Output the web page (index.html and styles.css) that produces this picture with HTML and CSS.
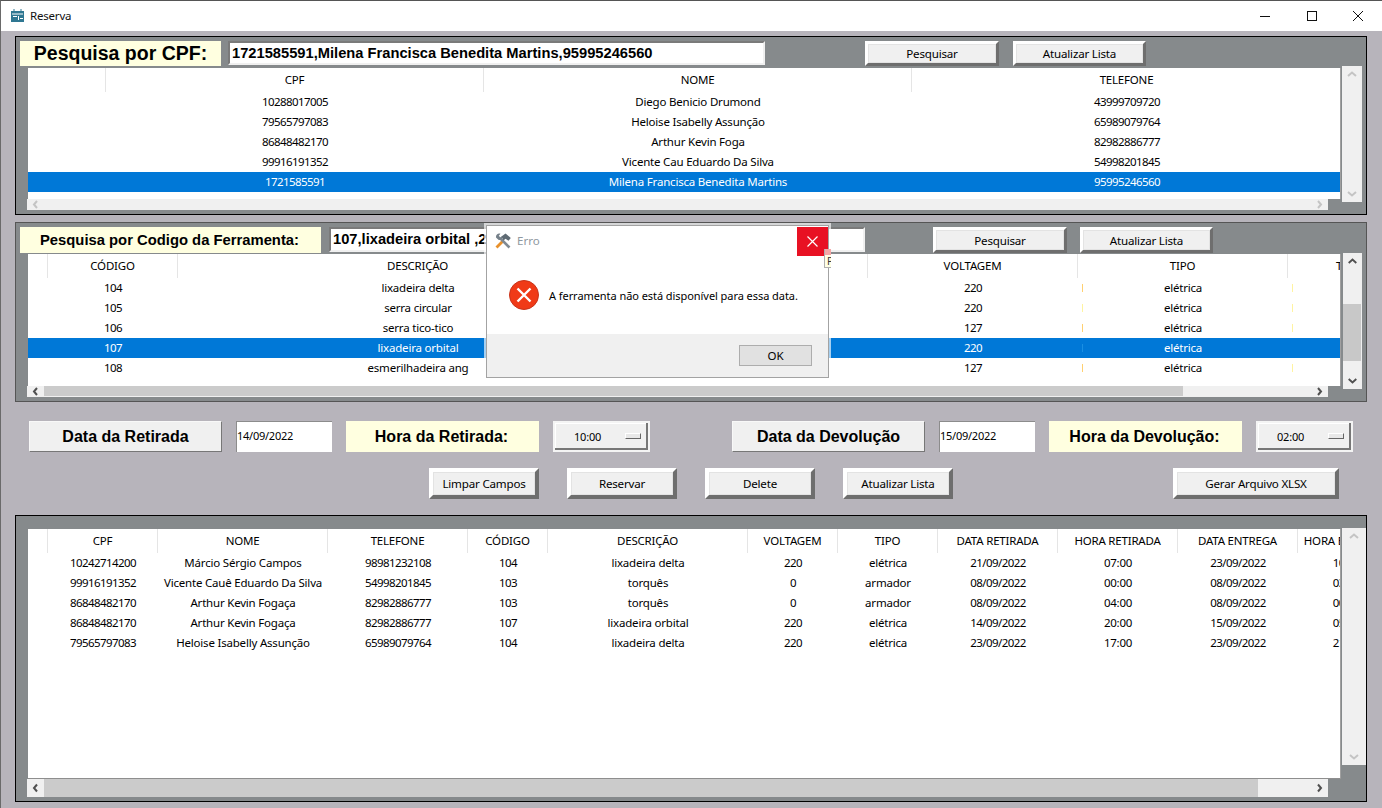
FILE: index.html
```html
<!DOCTYPE html>
<html lang="pt-BR">
<head>
<meta charset="utf-8">
<title>Reserva</title>
<link rel="stylesheet" href="styles.css">
</head>
<body>
<div class="window">
  <header class="titlebar">
    <svg class="app-icon" viewBox="0 0 13 13"><path fill="#2f7792" d="M0 2h2.500V0h1v2h6V0h1v2H13v11H0z"/><path fill="#fff" d="M1 4.500h11v1H1zM2 7h4v1H2zM7 7h1v4H7zM9 9h3v1H9z"/></svg>
    <span class="title-text">Reserva</span>
    <div class="win-controls">
      <svg class="win-btn" viewBox="0 0 46 30"><path d="M17 15.500h10" stroke="#111" fill="none"/></svg>
      <svg class="win-btn" viewBox="0 0 46 30"><rect x="18.500" y="10.500" width="9" height="9" stroke="#111" fill="none"/></svg>
      <svg class="win-btn" viewBox="0 0 46 30"><path d="M18 10l10 10M28 10L18 20" stroke="#111" fill="none"/></svg>
    </div>
  </header>

  <section class="panel panel-a">
    <div class="toolbar">
      <div class="label label-cpf">Pesquisa por CPF:</div>
      <div class="entry entry-cpf">1721585591,Milena Francisca Benedita Martins,95995246560</div>
      <button class="btn btn-search btn-first-a">Pesquisar</button>
      <button class="btn btn-search">Atualizar Lista</button>
    </div>
    <div class="panel-body">
      <div class="grid-col">
        <div class="table t1">
          <div class="row head"><span></span><span>CPF</span><span>NOME</span><span>TELEFONE</span></div>
          <div class="row"><span></span><span>10288017005</span><span>Diego Benicio Drumond</span><span>43999709720</span></div>
          <div class="row"><span></span><span>79565797083</span><span>Heloise Isabelly Assunção</span><span>65989079764</span></div>
          <div class="row"><span></span><span>86848482170</span><span>Arthur Kevin Foga</span><span>82982886777</span></div>
          <div class="row"><span></span><span>99916191352</span><span>Vicente Cau Eduardo Da Silva</span><span>54998201845</span></div>
          <div class="row sel"><span></span><span>1721585591</span><span>Milena Francisca Benedita Martins</span><span>95995246560</span></div>
        </div>
        <div class="hscroll hs-thin">
          <svg class="ar-h off" viewBox="0 0 17 11"><path d="M10 2L7 5.500 10 9"/></svg>
          <div class="h-track"></div>
          <svg class="ar-h off" viewBox="0 0 17 11"><path d="M7 2l3 3.500L7 9"/></svg>
        </div>
      </div>
      <div class="vscroll vs-a">
        <svg class="ar-v off" viewBox="0 0 20 17"><path d="M6 10l4-3.500 4 3.500"/></svg>
        <div class="v-track"></div>
        <svg class="ar-v off" viewBox="0 0 20 17"><path d="M6 7l4 3.500L14 7"/></svg>
      </div>
    </div>
  </section>

  <section class="panel panel-b">
    <div class="toolbar">
      <div class="label label-cod">Pesquisa por Codigo da Ferramenta:</div>
      <div class="entry entry-cod">107,lixadeira orbital ,220,elétrica</div>
      <button class="btn btn-search btn-first-b">Pesquisar</button>
      <button class="btn btn-search btn-second-b">Atualizar Lista</button>
    </div>
    <div class="panel-body">
      <div class="grid-col">
        <div class="table t2">
          <div class="row head"><span></span><span>CÓDIGO</span><span>DESCRIÇÃO</span><span></span><span>VOLTAGEM</span><span>TIPO</span><span class="clip-t">T</span></div>
          <div class="row"><span></span><span>104</span><span>lixadeira delta</span><span></span><span>220</span><span class="tick orange">elétrica</span><span class="tick"></span></div>
          <div class="row"><span></span><span>105</span><span>serra circular</span><span></span><span>220</span><span class="tick">elétrica</span><span class="tick"></span></div>
          <div class="row"><span></span><span>106</span><span>serra tico-tico</span><span></span><span>127</span><span class="tick orange">elétrica</span><span class="tick"></span></div>
          <div class="row sel"><span></span><span>107</span><span>lixadeira orbital</span><span></span><span>220</span><span class="tick blue">elétrica</span><span></span></div>
          <div class="row"><span></span><span>108</span><span>esmerilhadeira ang</span><span></span><span>127</span><span class="tick orange">elétrica</span><span class="tick"></span></div>
        </div>
        <div class="hscroll hs-thin">
          <svg class="ar-h" viewBox="0 0 17 11"><path d="M10 2L7 5.500 10 9"/></svg>
          <div class="h-track"><div class="h-thumb thumb-b"></div></div>
          <svg class="ar-h" viewBox="0 0 17 11"><path d="M7 2l3 3.500L7 9"/></svg>
        </div>
      </div>
      <div class="vscroll vs-b">
        <svg class="ar-v" viewBox="0 0 20 17"><path d="M6 10l4-3.500 4 3.500"/></svg>
        <div class="v-track"><div class="v-thumb"></div></div>
        <svg class="ar-v" viewBox="0 0 20 17"><path d="M6 7l4 3.500L14 7"/></svg>
      </div>
    </div>
  </section>

  <div class="controls">
    <button class="flat-btn">Data da Retirada</button>
    <div class="date">14/09/2022</div>
    <div class="label label-time">Hora da Retirada:</div>
    <div class="option"><span>10:00</span><i class="option-mark"></i></div>
    <button class="flat-btn group-gap">Data da Devolução</button>
    <div class="date">15/09/2022</div>
    <div class="label label-time">Hora da Devolução:</div>
    <div class="option"><span>02:00</span><i class="option-mark"></i></div>
  </div>

  <div class="actions">
    <button class="btn btn-action">Limpar Campos</button>
    <button class="btn btn-action">Reservar</button>
    <button class="btn btn-action">Delete</button>
    <button class="btn btn-action">Atualizar Lista</button>
    <button class="btn btn-xlsx">Gerar Arquivo XLSX</button>
  </div>

  <section class="panel panel-c">
    <div class="panel-body">
      <div class="grid-col">
        <div class="table t3">
          <div class="row head"><span></span><span>CPF</span><span>NOME</span><span>TELEFONE</span><span>CÓDIGO</span><span>DESCRIÇÃO</span><span>VOLTAGEM</span><span>TIPO</span><span>DATA RETIRADA</span><span>HORA RETIRADA</span><span>DATA ENTREGA</span><span>HORA ENTREGA</span></div>
          <div class="row"><span></span><span>10242714200</span><span>Márcio Sérgio Campos</span><span>98981232108</span><span>104</span><span>lixadeira delta</span><span>220</span><span>elétrica</span><span>21/09/2022</span><span>07:00</span><span>23/09/2022</span><span>10:00</span></div>
          <div class="row"><span></span><span>99916191352</span><span>Vicente Cauê Eduardo Da Silva</span><span>54998201845</span><span>103</span><span>torquês</span><span>0</span><span>armador</span><span>08/09/2022</span><span>00:00</span><span>08/09/2022</span><span>03:00</span></div>
          <div class="row"><span></span><span>86848482170</span><span>Arthur Kevin Fogaça</span><span>82982886777</span><span>103</span><span>torquês</span><span>0</span><span>armador</span><span>08/09/2022</span><span>04:00</span><span>08/09/2022</span><span>00:00</span></div>
          <div class="row"><span></span><span>86848482170</span><span>Arthur Kevin Fogaça</span><span>82982886777</span><span>107</span><span>lixadeira orbital</span><span>220</span><span>elétrica</span><span>14/09/2022</span><span>20:00</span><span>15/09/2022</span><span>05:00</span></div>
          <div class="row"><span></span><span>79565797083</span><span>Heloise Isabelly Assunção</span><span>65989079764</span><span>104</span><span>lixadeira delta</span><span>220</span><span>elétrica</span><span>23/09/2022</span><span>17:00</span><span>23/09/2022</span><span>21:00</span></div>
        </div>
        <div class="hscroll hs-wide">
          <svg class="ar-h" viewBox="0 0 17 18"><path d="M10 5.500L7 9l3 3.500"/></svg>
          <div class="h-track"><div class="h-thumb thumb-c"></div></div>
          <svg class="ar-h" viewBox="0 0 17 18"><path d="M7 5.500L10 9l-3 3.500"/></svg>
        </div>
      </div>
      <div class="vscroll vs-c">
        <svg class="ar-v off" viewBox="0 0 24 17"><path d="M8 10l4-3.500 4 3.500"/></svg>
        <div class="v-track"></div>
        <svg class="ar-v off" viewBox="0 0 24 17"><path d="M8 7l4 3.500L16 7"/></svg>
      </div>
    </div>
  </section>

  <div class="dialog">
    <div class="dialog-title">
      <svg class="tool-icon" viewBox="0 0 16 16">
        <path d="M1.500 14.500L8 8" stroke="#e8912c" stroke-width="2.800" fill="none"/>
        <path d="M5 5l9.500 9.500" stroke="#7f8a93" stroke-width="2.600" fill="none"/>
        <path d="M1 4.500C.6 2 3 -.2 5.500 .8L3.800 2.800l1.600 1.600L7.400 2.700c.8 2.500-1.700 4.900-4 4z" fill="#76818a"/>
        <path d="M6.500 3.500L10.500 .5 15.800 5 13.500 7.800 10.500 5.800 8.500 7.500z" fill="#5f6b74"/>
      </svg>
      <span class="dialog-name">Erro</span>
      <div class="dialog-close"><svg viewBox="0 0 31 29"><path d="M10.500 9.500l10 10M20.500 9.500l-10 10" stroke="#fff" stroke-width="1.200" fill="none"/></svg></div>
    </div>
    <div class="dialog-body">
      <svg class="err-icon" viewBox="0 0 30 30"><circle cx="15" cy="15" r="14.500" fill="#f03a17" stroke="#c8331a"/><path d="M8.500 8.500l13 13M21.500 8.500l-13 13" stroke="#fff" stroke-width="2.400" fill="none"/></svg>
      <p class="dialog-msg">A ferramenta não está disponível para essa data.</p>
    </div>
    <div class="dialog-foot"><button class="ok">OK</button></div>
    <div class="tip"><i class="tip-top"></i><span class="tip-text">P</span></div>
  </div>
</div>
</body>
</html>
```
FILE: styles.css
```css
* { box-sizing: border-box; }
html, body { margin: 0; padding: 0; }
body { width: 1382px; height: 808px; overflow: hidden; background: #b7b4bb; font-family: "Noto Sans", "Open Sans", sans-serif; font-size: 11.500px; letter-spacing: -0.2px; color: #000; }
.window { position: relative; width: 1382px; height: 808px; border-top: 1px solid #555; border-left: 1px solid #6a6a6a; background: #b7b4bb; }

.titlebar { height: 30px; background: #fff; display: flex; align-items: center; margin-bottom: 5px; }
.app-icon { width: 13px; height: 13px; margin-left: 10px; margin-top: -1px; }
.title-text { margin-left: 6px; font-size: 11.500px; color: #111; margin-top: -1px; }
.win-controls { margin-left: auto; margin-right: 1px; display: flex; }
.win-btn { width: 46px; height: 30px; display: block; }

.panel { margin-left: 14px; width: 1352px; background: #868a8c; border: 1px solid #000; }
.panel-a { height: 179px; }
.panel-b { height: 180px; margin-top: 7px; border-color: #555; }
.panel-c { height: 287px; margin-top: 16px; padding-top: 13px; }

.toolbar { display: flex; padding: 4px 0 0 4px; align-items: flex-start; }
.panel-a .toolbar { height: 31px; }
.panel-b .toolbar { height: 31px; }

.label { background: #ffffe0; font-family: "Liberation Sans", Arial, sans-serif; font-weight: 700; letter-spacing: 0; display: flex; align-items: center; justify-content: center; color: #000; }
.label-cpf { width: 201px; height: 25px; font-size: 19.500px; }
.label-cod { width: 301px; height: 26px; font-size: 14.800px; padding-right: 2px; }
.label-time { width: 193px; height: 31px; font-size: 16px; padding-right: 2px; }

.entry { background: #fff; border: 2px solid; border-color: #7a7a7a #f0f0f0 #f0f0f0 #7a7a7a; font-family: "Liberation Sans", Arial, sans-serif; font-weight: 700; font-size: 14.700px; letter-spacing: 0; padding-left: 2px; white-space: nowrap; overflow: hidden; line-height: 20px; }
.entry-cpf { width: 537px; height: 24px; margin-left: 7px; }
.entry-cod { width: 536px; height: 25px; margin-left: 8px; }

.btn { border: 4px solid; border-color: #fff #6e6e6e #6e6e6e #fff; background: #f0f0f0; box-shadow: inset 1px 1px 0 #e3e3e3, inset -1px -1px 0 #e3e3e3; padding: 0; font-family: inherit; font-size: 11.600px; letter-spacing: -0.2px; color: #000; white-space: nowrap; }
.btn-search { height: 25px; width: 133px; margin-left: 14px; border-width: 3px; }
.btn-first-a { margin-left: 100px; width: 134px; }
.btn-first-b { margin-left: 68px; width: 134px; height: 26px; }
.btn-second-b { margin-left: 13px; height: 26px; }

.panel-body { display: flex; align-items: flex-start; }
.grid-col { width: 1314px; margin-left: 11px; flex: none; }
.table { margin-left: 1px; width: 1313px; background: #fff; overflow: hidden; border-right: 1px solid #a0a0a0; }
.t1 { height: 131px; }
.t2 { height: 132px; }
.t3 { height: 250px; border-bottom: 1px solid #8e8e8e; }

.row { display: grid; height: 20px; width: max-content; }
.t1 .row { grid-template-columns: 78px 378px 428px 430px; }
.t2 .row { grid-template-columns: 20px 130px 480px 210px 210px 210px 210px; }
.t3 .row { grid-template-columns: 20px 110px 170px 140px 80px 200px 90px 100px 120px 120px 120px 96px; }
.row span { position: relative; display: block; text-align: center; line-height: 20px; white-space: nowrap; overflow: hidden; }
.row.head { height: 24px; }
.row.head span { line-height: 23px; border-right: 1px solid #e5e5e5; height: 24px; }
.row.sel { background: #0078d7; color: #fff; width: 1313px; }
.clip-t { text-align: left !important; padding-left: 48px; }

.t1 .row:not(.head) span:nth-child(2n),
.t2 .row:not(.head) span:nth-child(2),
.t2 .row:not(.head) span:nth-child(5),
.t3 .row:not(.head) span:nth-child(2),
.t3 .row:not(.head) span:nth-child(4),
.t3 .row:not(.head) span:nth-child(5),
.t3 .row:not(.head) span:nth-child(7),
.t3 .row:not(.head) span:nth-child(n+9):not(:nth-child(10)) { letter-spacing: -0.56px; }
.t3 .row:not(.head) span:nth-child(10) { letter-spacing: -0.3px; }

.tick::before { content: ""; position: absolute; left: 4px; top: 6px; width: 1px; height: 8px; background: #fff3a0; }
.tick.orange::before { background: #ffd070; }
.tick.blue::before { background: #1a8fe3; }

.hscroll { background: #f0f0f0; display: flex; width: 1301px; }
.hs-thin { height: 11px; }
.hs-wide { height: 18px; }
.ar-h { width: 17px; height: 100%; flex: none; display: block; }
.ar-h path, .ar-v path { fill: none; stroke: #505050; stroke-width: 2; }
.ar-h.off path, .ar-v.off path { stroke: #c4c4c4; }
.h-track { flex: 1; display: flex; }
.h-thumb { background: #cbcbcb; height: 100%; }
.hs-thin .h-thumb { height: 10px; }
.thumb-b { width: 1139px; }
.thumb-c { width: 1214px; }

.vscroll { background: #f0f0f0; display: flex; flex-direction: column; flex: none; }
.vs-a { width: 20px; height: 136px; margin: -2px 0 0 1px; }
.vs-b { width: 19px; height: 136px; margin: -1px 0 0 2px; }
.vs-c { width: 24px; height: 237px; margin: -1px 0 0 1px; }
.ar-v { width: 100%; height: 17px; flex: none; display: block; }
.v-track { flex: 1; }
.v-thumb { height: 57px; margin-top: 34px; width: 18px; background: #c8c8c8; }

.controls { display: flex; align-items: stretch; gap: 14px; height: 31px; margin: 19px 0 0 28px; }
.flat-btn { width: 193px; border: 1px solid; border-color: #f8f8f8 #777 #777 #f8f8f8; background: #f0f0f0; padding: 0; font-family: "Liberation Sans", Arial, sans-serif; font-weight: 700; font-size: 16px; letter-spacing: 0; color: #000; }
.group-gap { margin-left: 68px; }
.date { width: 96px; background: #fff; border-top: 1px solid #8c8c8c; border-left: 1px solid #8c8c8c; padding-left: 0; line-height: 28px; font-size: 11px; letter-spacing: -0.25px; }
.option { width: 97px; background: #f0f0f0; border: 2px solid #f4f4f4; box-shadow: inset -2px -2px 0 #777, inset 1px 1px 0 #fff; display: flex; align-items: center; padding-left: 19px; font-size: 11px; letter-spacing: -0.2px; }
.option span { width: 51px; }
.option-mark { width: 16px; height: 6px; background: #e8e8e8; border: 1px solid; border-color: #fff #666 #666 #fff; margin-top: -1px; }

.actions { display: flex; gap: 28px; height: 31px; margin: 16px 0 0 428px; }
.btn-action { width: 110px; }
.btn-xlsx { width: 166px; margin-left: 192px; }

.dialog { position: absolute; left: 485px; top: 224px; width: 343px; height: 153px; background: #fff; border: 1px solid #a3a3a3; box-shadow: 0 0 0 2px rgba(255, 255, 255, .65); display: flex; flex-direction: column; font-size: 11px; letter-spacing: 0; }
.dialog-title { height: 30px; display: flex; align-items: flex-start; flex: none; }
.tool-icon { width: 16px; height: 16px; margin: 7px 0 0 8px; }
.dialog-name { margin: 7px 0 0 6px; color: #8f989f; font-size: 11.500px; line-height: 16px; }
.dialog-close { margin-left: auto; width: 31px; height: 29px; background: #e81123; margin-top: 1px; }
.dialog-close svg { display: block; width: 31px; height: 29px; }
.dialog-body { height: 78px; display: flex; align-items: center; flex: none; padding-bottom: 1px; }
.err-icon { width: 30px; height: 30px; margin-left: 22px; flex: none; }
.dialog-msg { margin: 1px 0 0 10px; font-size: 11px; letter-spacing: -0.06px; white-space: nowrap; }
.dialog-foot { flex: 1; background: #f0f0f0; display: flex; justify-content: flex-end; padding: 11px 16px 0 0; }
.ok { width: 73px; height: 21px; background: #e1e1e1; border: 1px solid #adadad; padding: 0; font-family: inherit; font-size: 11.500px; letter-spacing: 0; color: #000; }
.tip { position: absolute; left: 337px; top: 23px; width: 7px; height: 19px; overflow: hidden; background: #ffffe6; border-left: 1px solid #b0b0b0; border-bottom: 1px solid #b0b0b0; }
.tip-top { display: block; height: 6px; background: #f4a8a8; }
.tip-text { display: block; font-size: 10px; line-height: 12px; padding-left: 2px; color: #333; }
```
